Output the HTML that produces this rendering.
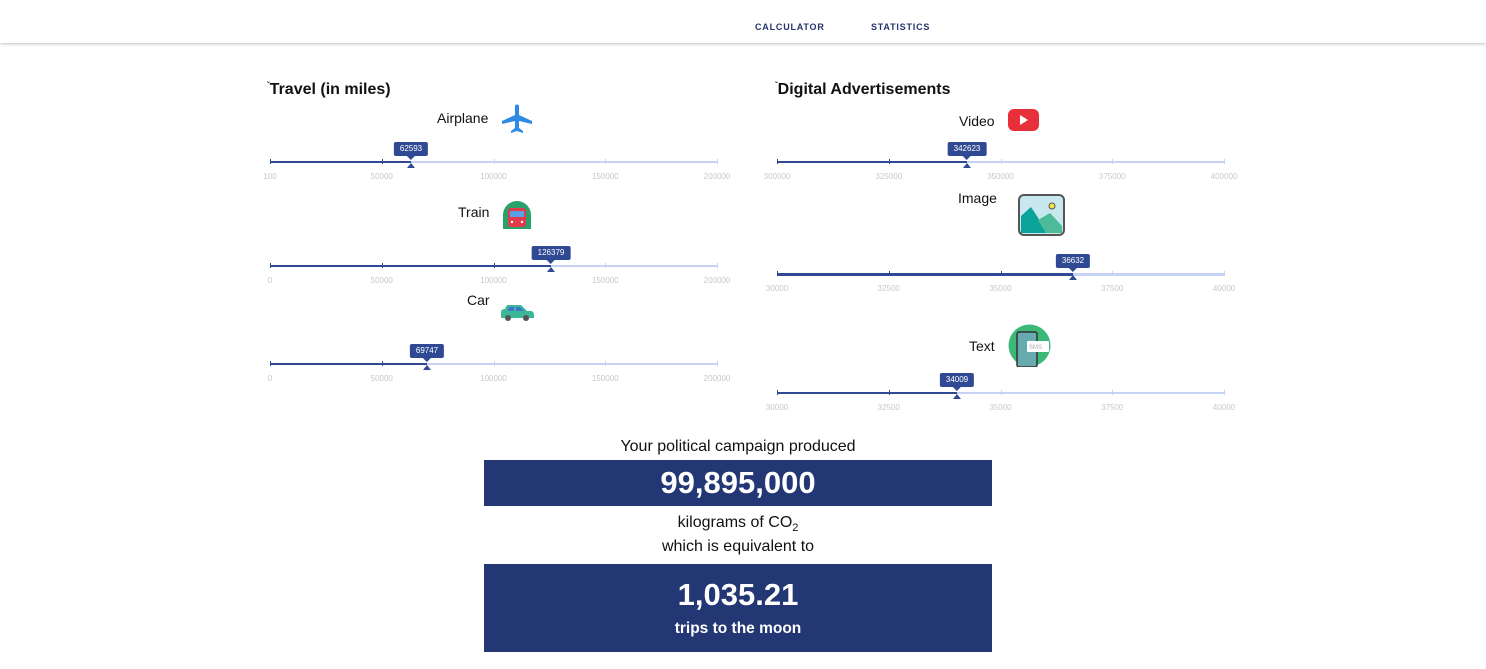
<!DOCTYPE html><html><head><style>
body{margin:0;width:1486px;height:669px;overflow:hidden;background:#fff;font-family:"Liberation Sans",sans-serif;position:relative}
.a{position:absolute}
.hdr{left:0;top:0;width:1486px;height:43px;background:#fff;box-shadow:0 1px 3px rgba(0,0,0,.25)}
.nav{font-size:9px;font-weight:bold;letter-spacing:0.8px;color:#26336b;top:22px}
h2{position:absolute;margin:0;font-size:16px;font-weight:bold;color:#111}
.lbl{font-size:14px;color:#111}
.rail{height:1px;background:#c6d3f5}
.trk{height:1px;background:#2f4a93}
.tick{width:1px;height:5px;background:#aab}
.tl{font-size:8px;color:#c8c8c8;transform:translateX(-50%)}
.tip{background:#2f4a93;color:#fff;font-size:8px;height:14px;line-height:14px;padding:0 6px;border-radius:2px;transform:translateX(-50%)}
.tip:after{content:"";position:absolute;left:50%;bottom:-4px;margin-left:-4px;border:4px solid transparent;border-bottom:0;border-top-color:#2f4a93}
.hd{width:0;height:0;border:4px solid transparent;border-top:0;border-bottom:5px solid #2f4a93;transform:translateX(-50%)}
.box{left:484px;width:508px;background:#223773;color:#fff;text-align:center;font-weight:bold}
.c{text-align:center;font-size:16px;color:#111;left:484px;width:508px}
</style></head><body>
<div class="a hdr"></div>
<div class="a nav" style="left:755px">CALCULATOR</div>
<div class="a nav" style="left:871px">STATISTICS</div>

<h2 style="left:267px;top:81px"><span style="font-size:8px;vertical-align:top">ˇ</span>Travel (in miles)</h2>
<h2 style="left:775px;top:81px"><span style="font-size:8px;vertical-align:top">ˇ</span>Digital Advertisements</h2>

<div class="a lbl" style="left:437px;top:110px">Airplane</div>
<svg class="a" style="left:501px;top:104px" width="32" height="30" viewBox="0 0 32 30"><path d="M14 2c0-2 4-2 4 0v9l13 6v3l-13-3v7l4 3v2l-6-2-6 2v-2l4-3v-7L1 20v-3l13-6z" fill="#2f8ae6"/></svg>
<div class="a lbl" style="left:458px;top:204px">Train</div>
<svg class="a" style="left:502px;top:201px" width="30" height="28" viewBox="0 0 30 28"><path d="M1 28V14a14 14 0 0 1 28 0v14z" fill="#2aa06a"/><rect x="6" y="7" width="18" height="19" rx="3" fill="#e23a4a"/><rect x="8" y="10" width="14" height="6" fill="#5aa0e6"/><circle cx="10" cy="21" r="1.2" fill="#fff"/><circle cx="20" cy="21" r="1.2" fill="#fff"/></svg>
<div class="a lbl" style="left:467px;top:292px">Car</div>
<svg class="a" style="left:500px;top:303px" width="34" height="19" viewBox="0 0 34 19"><path d="M7 2h14l6 6h4c2 0 3 2 3 4v3H1v-6c0-2 2-3 4-3z" fill="#3bb89a"/><path d="M9 4h5v4H8zM16 4h4l4 4h-8z" fill="#3f75c8"/><circle cx="8" cy="15" r="3" fill="#555"/><circle cx="26" cy="15" r="3" fill="#555"/></svg>

<div class="a lbl" style="left:959px;top:113px">Video</div>
<svg class="a" style="left:1008px;top:109px" width="31" height="22" viewBox="0 0 31 22"><rect width="31" height="22" rx="6" fill="#e8303c"/><path d="M12 6l8 5-8 5z" fill="#fff"/></svg>
<div class="a lbl" style="left:958px;top:190px">Image</div>
<svg class="a" style="left:1018px;top:194px" width="47" height="42" viewBox="0 0 47 42"><rect x="1" y="1" width="45" height="40" rx="5" fill="#c8e7ee" stroke="#555" stroke-width="2"/><circle cx="34" cy="12" r="3" fill="#f5e04a" stroke="#555"/><path d="M3 22l10-9 17 26H3z" fill="#0aa39a"/><path d="M20 26l12-7 12 13v7H28z" fill="#4dbb98"/></svg>
<div class="a lbl" style="left:969px;top:338px">Text</div>
<svg class="a" style="left:1008px;top:324px" width="43" height="43" viewBox="0 0 43 43"><circle cx="21.5" cy="21.5" r="21" fill="#3cb878"/><rect x="9" y="8" width="20" height="35" rx="2" fill="#67aab0" stroke="#333" stroke-width="1.5"/><rect x="19" y="17" width="22" height="11" rx="1" fill="#fff"/><text x="21" y="25" font-size="6" fill="#aaa" font-family="Liberation Sans">SMS</text></svg>

<div id="s"></div>

<div class="a c" style="top:438px">Your political campaign produced</div>
<div class="a box" style="top:460px;height:46px;line-height:46px;font-size:31px">99,895,000</div>
<div class="a c" style="top:514px">kilograms of CO<sub style="font-size:11px">2</sub></div>
<div class="a c" style="top:538px">which is equivalent to</div>
<div class="a box" style="top:564px;height:88px">
<div style="font-size:31px;margin-top:13px">1,035.21</div>
<div style="font-size:15.5px;margin-top:7px">trips to the moon</div></div>

<script>
var S=[[270,717,161,411,"62593",["100","50000","100000","150000","200000"],1],
[270,717,265,551,"126379",["0","50000","100000","150000","200000"],1],
[270,717,363,427,"69747",["0","50000","100000","150000","200000"],1],
[777,1224,161,967,"342623",["300000","325000","350000","375000","400000"],1],
[777,1224,273,1073,"36632",["30000","32500","35000","37500","40000"],2],
[777,1224,392,957,"34009",["30000","32500","35000","37500","40000"],1]];
var h="";
S.forEach(function(s){var L=s[0],R=s[1],y=s[2],x=s[3],w=R-L,t=s[6];
h+='<div class="a rail" style="left:'+L+'px;top:'+y+'px;width:'+w+'px;height:'+(t+1)+'px"></div>';
h+='<div class="a trk" style="left:'+L+'px;top:'+y+'px;width:'+(x-L)+'px;height:'+(t+1)+'px"></div>';
for(var i=0;i<5;i++){var tx=L+w*i/4;h+='<div class="a tick" style="left:'+tx+'px;top:'+(y-2)+'px;background:'+(tx<=x?'#2f4a93':'#c6d3f5')+'"></div>';
h+='<div class="a tl" style="left:'+tx+'px;top:'+(y+11)+'px">'+s[5][i]+'</div>';}
h+='<div class="a tip" style="left:'+x+'px;top:'+(y-19)+'px">'+s[4]+'</div>';
h+='<div class="a hd" style="left:'+x+'px;top:'+(y+2)+'px"></div>';});
document.getElementById("s").innerHTML=h;
</script>
</body></html>
